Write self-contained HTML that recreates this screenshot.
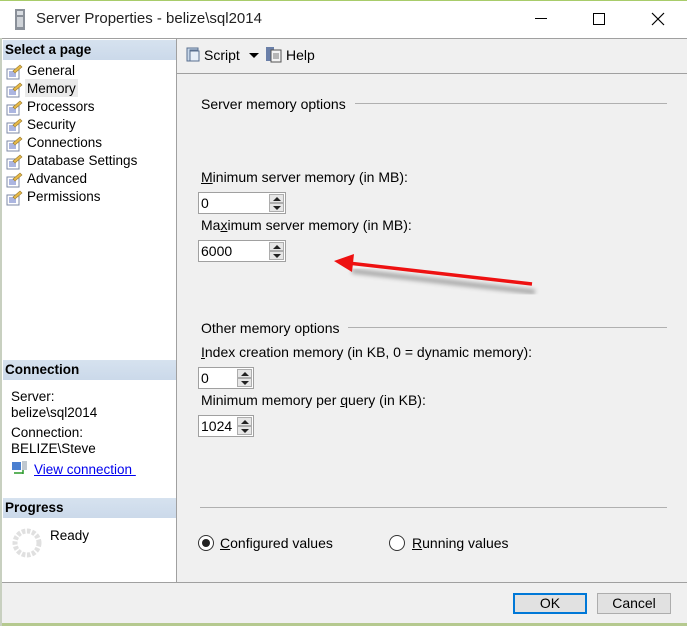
<!DOCTYPE html>
<html><head><meta charset="utf-8"><style>
*{margin:0;padding:0;box-sizing:border-box}
body{width:687px;height:626px;overflow:hidden;background:#f0f0f0;font-family:"Liberation Sans",sans-serif;font-size:13.5px;color:#000;position:relative}
.a{position:absolute;white-space:nowrap}
.c{font-size:14px}
.hdr{position:absolute;left:3px;width:173px;height:20px;background:linear-gradient(#d6e2ef,#cbd9ea);font-weight:bold;padding:2px 0 0 2px;font-size:13.5px}
.spin{position:absolute;background:#fff;border:1px solid #a0a0a0;height:22px;padding:2px 0 0 2px;font-size:14px}
.spin b{position:absolute;right:1px;width:15px;height:9px;background:#e6e6e6;border:1px solid #adadad}
.spin b.u{top:1px}.spin b.d{top:10px}
.spin b::after{content:"";position:absolute;left:3px;border-left:4px solid transparent;border-right:4px solid transparent}
.spin b.u::after{top:2px;border-bottom:4px solid #222}
.spin b.d::after{top:2px;border-top:4px solid #222}
.line{position:absolute;height:1px;background:#a0a0a0}
</style></head><body>
<div class="a" style="left:0;top:0;width:687px;height:38px;background:#fff;border-top:1px solid #a8cc6a"></div>
<svg class="a" style="left:14px;top:9px" width="12" height="21"><rect x="1" y="0" width="10" height="21" fill="#8a9099"/><rect x="3" y="2" width="6" height="4" fill="#d9dde2"/><rect x="3" y="8" width="6" height="10" fill="#cfd3d8"/></svg>
<div class="a" style="left:36px;top:10px;font-size:15px;color:#222">Server Properties - belize\sql2014</div>
<div class="a" style="left:535px;top:18px;width:12px;height:1px;background:#000"></div>
<div class="a" style="left:593px;top:13px;width:12px;height:12px;border:1px solid #000"></div>
<svg class="a" style="left:651px;top:12px" width="14" height="14"><path d="M1 1L13 13M13 1L1 13" stroke="#000" stroke-width="1.2"/></svg>
<div class="line" style="left:0;top:38px;width:687px"></div>
<div class="a" style="left:2px;top:39px;width:175px;height:544px;background:#fff;border-right:1px solid #a0a0a0"></div>
<div class="hdr" style="top:40px">Select a page</div>
<div class="a" style="left:25px;top:79px;width:53px;height:18px;background:#eaeaea"></div>
<div class="a" style="left:27px;top:62px;line-height:18px">General<br>Memory<br>Processors<br>Security<br>Connections<br>Database Settings<br>Advanced<br>Permissions</div>
<svg class="a" style="left:6px;top:63px" width="18" height="144">
<g id="ic"><rect x="1" y="6" width="12" height="10" fill="#fff" stroke="#7c8aa6"/><path d="M3 9h7M3 11h7M3 13h7" stroke="#5a6cc0"/><path d="M7 8l7-6 2 2-7 6z" fill="#e6b94a" stroke="#9a7a2a" stroke-width=".6"/></g>
<use href="#ic" y="18"/><use href="#ic" y="36"/><use href="#ic" y="54"/><use href="#ic" y="72"/><use href="#ic" y="90"/><use href="#ic" y="108"/><use href="#ic" y="126"/>
</svg>
<div class="hdr" style="top:360px">Connection</div>
<div class="a" style="left:11px;top:389px;line-height:16px">Server:<br>belize\sql2014</div>
<div class="a" style="left:11px;top:425px;line-height:16px">Connection:<br>BELIZE\Steve</div>
<svg class="a" style="left:11px;top:461px" width="17" height="15"><rect x="1" y="1" width="9" height="8" fill="#4a7fd0"/><rect x="11" y="0" width="5" height="9" fill="#c0c8d0"/><path d="M3 12h9M12 9v4" stroke="#2a9a2a" stroke-width="1.5"/></svg>
<div class="a" style="left:34px;top:462px;color:#0000ee;text-decoration:underline">View connection&nbsp;</div>
<div class="hdr" style="top:498px">Progress</div>
<svg class="a" style="left:11px;top:527px" width="32" height="32"><circle cx="16" cy="16" r="12" fill="none" stroke="#e0e0e0" stroke-width="5" stroke-dasharray="3.5 1.6"/></svg>
<div class="a" style="left:50px;top:528px">Ready</div>
<svg class="a" style="left:184px;top:46px" width="17" height="17"><path d="M3 2h11v2H6v11H3z" fill="#c8d8ea" stroke="#5a7090"/><path d="M6 5h9v10H6z" fill="#e6eef8" stroke="#5a7090"/></svg>
<div class="a c" style="left:204px;top:47px">Script</div>
<div class="a" style="left:249px;top:53px;border-left:5px solid transparent;border-right:5px solid transparent;border-top:5px solid #000"></div>
<svg class="a" style="left:265px;top:46px" width="18" height="18"><rect x="1" y="1" width="8" height="14" fill="#6a7fa8"/><rect x="6" y="4" width="10" height="12" fill="#f4f4f4" stroke="#555"/><path d="M8 8h6M8 10h6M8 12h6" stroke="#777"/></svg>
<div class="a c" style="left:286px;top:47px">Help</div>
<div class="line" style="left:177px;top:73px;width:510px"></div>
<div class="a c" style="left:201px;top:96px">Server memory options</div>
<div class="line" style="left:355px;top:103px;width:312px;background:#b0b0b0"></div>
<div class="a c" style="left:201px;top:169px"><u>M</u>inimum server memory (in MB):</div>
<div class="spin" style="left:198px;top:192px;width:88px">0<b class="u"></b><b class="d"></b></div>
<div class="a c" style="left:201px;top:217px">Ma<u>x</u>imum server memory (in MB):</div>
<div class="spin" style="left:198px;top:240px;width:88px">6000<b class="u"></b><b class="d"></b></div>
<svg class="a" style="left:330px;top:250px" width="215" height="45"><defs><filter id="bl"><feGaussianBlur stdDeviation="2"/></filter></defs><path d="M20 16L203 37" stroke="rgba(0,0,0,.3)" stroke-width="5" transform="translate(2,5)" filter="url(#bl)"/><path d="M18 13L202 34" stroke="#ee1111" stroke-width="3.5"/><path d="M4 11L24 4 22 22z" fill="#ee1111"/></svg>
<div class="a c" style="left:201px;top:320px">Other memory options</div>
<div class="line" style="left:348px;top:327px;width:319px;background:#b0b0b0"></div>
<div class="a c" style="left:201px;top:344px"><u>I</u>ndex creation memory (in KB, 0 = dynamic memory):</div>
<div class="spin" style="left:198px;top:367px;width:56px">0<b class="u"></b><b class="d"></b></div>
<div class="a c" style="left:201px;top:392px">Minimum memory per <u>q</u>uery (in KB):</div>
<div class="spin" style="left:198px;top:415px;width:56px">1024<b class="u"></b><b class="d"></b></div>
<div class="line" style="left:200px;top:507px;width:467px;background:#b0b0b0"></div>
<div class="a" style="left:198px;top:535px;width:16px;height:16px;border:1px solid #333;border-radius:50%;background:#fff"><div style="position:absolute;left:3px;top:3px;width:8px;height:8px;border-radius:50%;background:#222"></div></div>
<div class="a c" style="left:220px;top:535px"><u>C</u>onfigured values</div>
<div class="a" style="left:389px;top:535px;width:16px;height:16px;border:1px solid #333;border-radius:50%;background:#fff"></div>
<div class="a c" style="left:412px;top:535px"><u>R</u>unning values</div>
<div class="line" style="left:0;top:582px;width:687px"></div>
<div class="a c" style="left:513px;top:593px;width:74px;height:21px;border:2px solid #0078d7;background:#e1e1e1;text-align:center;line-height:17px">OK</div>
<div class="a c" style="left:597px;top:593px;width:74px;height:21px;border:1px solid #adadad;background:#e1e1e1;text-align:center;line-height:19px">Cancel</div>
<div class="a" style="left:0;top:623px;width:687px;height:3px;background:#b5c98f"></div>
<div class="a" style="left:0;top:38px;width:2px;height:588px;background:#c8d0c0"></div>
</body></html>
